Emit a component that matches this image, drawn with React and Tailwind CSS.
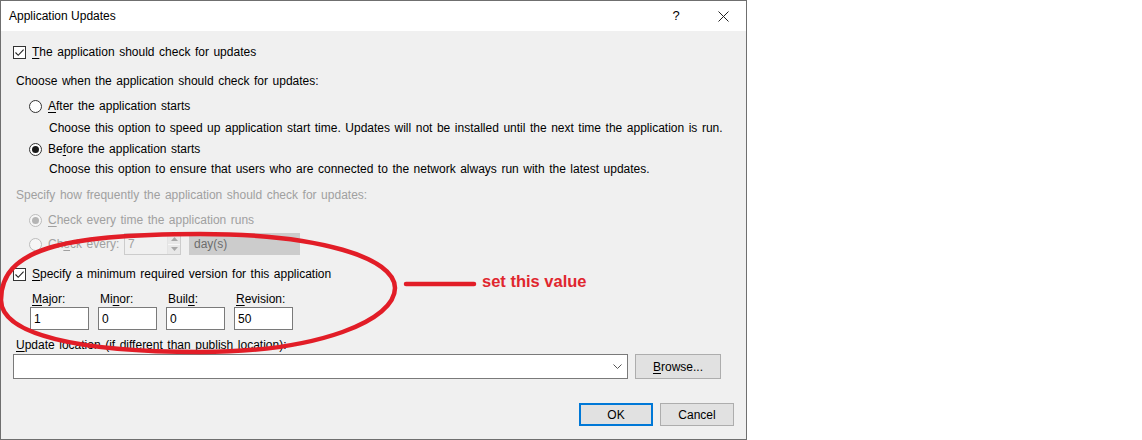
import { useState } from "react";

// Small Win32-style controls used by the dialog
function CheckBox({ checked }) {
  return (
    <span className="w-[13px] h-[13px] border border-[#333333] bg-white flex items-center justify-center shrink-0">
      {checked && (
        <svg width="11" height="11" viewBox="0 0 11 11">
          <path d="M1.5 5.5 L4.2 8.3 L9.6 2.6" fill="none" stroke="#222" strokeWidth="1.1" />
        </svg>
      )}
    </span>
  );
}

function Radio({ checked, disabled }) {
  return (
    <span
      className={`w-[13px] h-[13px] rounded-full border flex items-center justify-center shrink-0 ${
        disabled ? "border-[#bcbcbc] bg-[#f6f6f6]" : "border-[#333333] bg-white"
      }`}
    >
      {checked && <span className={`w-[7px] h-[7px] rounded-full ${disabled ? "bg-[#b5b5b5]" : "bg-[#1a1a1a]"}`} />}
    </span>
  );
}

// label text with one underlined access-key letter
function Key({ text, k }) {
  const i = text.indexOf(k);
  return (
    <span>
      {text.slice(0, i)}
      <span className="underline underline-offset-2">{k}</span>
      {text.slice(i + 1)}
    </span>
  );
}

function VersionField({ label, k, value }) {
  return (
    <div className="flex flex-col w-[59px]">
      <div className="h-[16px] leading-[16px] pl-[2px]">
        <Key text={label} k={k} />
      </div>
      <input
        defaultValue={value}
        className="h-[23px] w-[59px] border border-[#7a7a7a] bg-white px-[3px] text-[12px] outline-none"
      />
    </div>
  );
}

export default function App() {
  const [version] = useState({ major: "1", minor: "0", build: "0", revision: "50" });

  return (
    <div className="relative w-[1142px] h-[440px] bg-white flex font-['Liberation_Sans',sans-serif] text-[12px] [word-spacing:1.2px] text-black">
      <div className="w-[747px] h-[440px] border border-[#6f6f6f] flex flex-col bg-[#f0f0f0]">
        {/* title bar */}
        <div className="h-[30px] bg-white flex items-center shrink-0">
          <span className="pl-[8px] flex-1 [word-spacing:0px]">Application Updates</span>
          <span className="w-[20px] text-center mr-[32px] text-[13px]">?</span>
          <svg width="11" height="11" viewBox="0 0 11 11" className="mr-[17px]">
            <path d="M0.5 0.5 L10.5 10.5 M10.5 0.5 L0.5 10.5" stroke="#222" strokeWidth="1" />
          </svg>
        </div>

        {/* body */}
        <div className="flex flex-col flex-1">
          <div className="h-[20px] mt-[11px] ml-[12px] flex items-center gap-[6px]">
            <CheckBox checked />
            <Key text="The application should check for updates" k="T" />
          </div>

          <div className="h-[20px] mt-[9px] ml-[15px] flex items-center">Choose when the application should check for updates:</div>

          <div className="h-[20px] mt-[5px] ml-[28px] flex items-center gap-[6px]">
            <Radio />
            <Key text="After the application starts" k="A" />
          </div>
          <div className="h-[20px] mt-[2px] ml-[48px] flex items-center">
            Choose this option to speed up application start time. Updates will not be installed until the next time the application is run.
          </div>

          <div className="h-[20px] mt-[1px] ml-[28px] flex items-center gap-[6px]">
            <Radio checked />
            <Key text="Before the application starts" k="f" />
          </div>
          <div className="h-[20px] ml-[48px] flex items-center">
            Choose this option to ensure that users who are connected to the network always run with the latest updates.
          </div>

          <div className="h-[20px] mt-[6px] ml-[15px] flex items-center text-[#a0a0a0]">
            Specify how frequently the application should check for updates:
          </div>

          <div className="h-[20px] mt-[5px] ml-[28px] flex items-center gap-[6px] text-[#a0a0a0]">
            <Radio checked disabled />
            <Key text="Check every time the application runs" k="C" />
          </div>

          <div className="h-[22px] mt-[3px] ml-[28px] flex items-center text-[#a0a0a0]">
            <Radio disabled />
            <span className="ml-[6px] w-[76px]">
              <Key text="Check every:" k="e" />
            </span>
            <div className="h-[22px] w-[57px] border border-[#cccccc] bg-[#f0f0f0] flex">
              <span className="flex-1 pl-[3px] leading-[20px]">7</span>
              <div className="w-[13px] flex flex-col border-l border-[#e3e3e3]">
                <div className="flex-1 flex items-center justify-center bg-[#e8e8e8]">
                  <svg width="7" height="4" viewBox="0 0 7 4">
                    <path d="M0 4 L3.5 0 L7 4 Z" fill="#a8a8a8" />
                  </svg>
                </div>
                <div className="flex-1 flex items-center justify-center bg-[#e8e8e8] border-t border-[#f7f7f7]">
                  <svg width="7" height="4" viewBox="0 0 7 4">
                    <path d="M0 0 L3.5 4 L7 0 Z" fill="#a8a8a8" />
                  </svg>
                </div>
              </div>
            </div>
            <div className="ml-[8px] h-[22px] w-[111px] bg-[#cccccc] pl-[5px] leading-[22px] text-[#6d6d6d]">day(s)</div>
          </div>

          <div className="h-[20px] mt-[9px] ml-[12px] flex items-center gap-[6px]">
            <CheckBox checked />
            <Key text="Specify a minimum required version for this application" k="S" />
          </div>

          <div className="mt-[7px] ml-[29px] flex gap-[9px]">
            <VersionField label="Major:" k="M" value={version.major} />
            <VersionField label="Minor:" k="n" value={version.minor} />
            <VersionField label="Build:" k="d" value={version.build} />
            <VersionField label="Revision:" k="R" value={version.revision} />
          </div>

          <div className="h-[16px] leading-[16px] mt-[7px] ml-[15px]">
            <Key text="Update location (if different than publish location):" k="U" />
          </div>

          <div className="mt-[1px] ml-[12px] flex items-center gap-[7px]">
            <div className="h-[25px] w-[615px] border border-[#7a7a7a] bg-white flex items-center justify-end pr-[5px]">
              <svg width="9" height="5" viewBox="0 0 9 5">
                <path d="M0.5 0.5 L4.5 4.5 L8.5 0.5" fill="none" stroke="#555" strokeWidth="1" />
              </svg>
            </div>
            <button className="h-[25px] w-[86px] border border-[#adadad] bg-[#e1e1e1] flex items-center justify-center">
              <Key text="Browse..." k="B" />
            </button>
          </div>

          <div className="mt-[24px] flex justify-end gap-[7px] pr-[12px]">
            <button className="h-[23px] w-[74px] border-2 border-[#0078d7] bg-[#e1e1e1]">OK</button>
            <button className="h-[23px] w-[74px] border border-[#adadad] bg-[#e1e1e1]">Cancel</button>
          </div>
        </div>
      </div>

      {/* hand-drawn red markup over the dialog */}
      <svg className="absolute left-0 top-0 pointer-events-none" width="1142" height="440" viewBox="0 0 1142 440">
        <path
          d="M1 300 C1 250 60 234 200 234 C320 234 395 258 395 288 C395 320 320 352 200 352 C80 352 1 335 1 300 Z"
          fill="none"
          stroke="#e21d27"
          strokeWidth="4.5"
        />
        <path d="M406 284 L474 284" stroke="#e21d27" strokeWidth="4.5" strokeLinecap="round" />
      </svg>
      <span className="absolute left-[482px] top-[269px] text-[16.5px] font-bold [word-spacing:0px] text-[#e0262e]">set this value</span>
    </div>
  );
}
